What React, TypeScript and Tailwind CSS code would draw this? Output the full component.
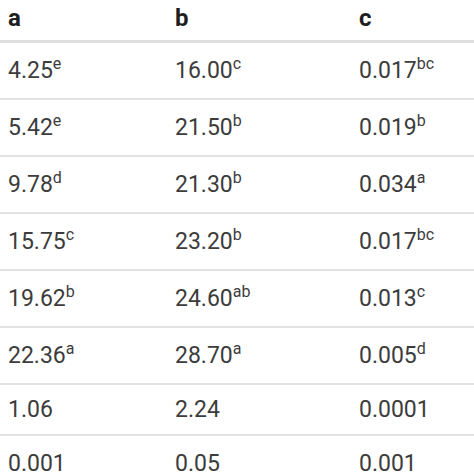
const rows: [string, string, string, string, string, string][] = [
  ['4.25', 'e', '16.00', 'c', '0.017', 'bc'],
  ['5.42', 'e', '21.50', 'b', '0.019', 'b'],
  ['9.78', 'd', '21.30', 'b', '0.034', 'a'],
  ['15.75', 'c', '23.20', 'b', '0.017', 'bc'],
  ['19.62', 'b', '24.60', 'ab', '0.013', 'c'],
  ['22.36', 'a', '28.70', 'a', '0.005', 'd'],
  ['1.06', '', '2.24', '', '0.0001', ''],
  ['0.001', '', '0.05', '', '0.001', ''],
];

function Cell({ value, mark }: { value: string; mark: string }) {
  return (
    <div className="pl-2 flex items-center pt-[2px]">
      <span>
        {value}
        {mark && <sup className="text-[16px] -top-[0.55em]">{mark}</sup>}
      </span>
    </div>
  );
}

export default function App() {
  return (
    <div className="w-[474px] h-[474px] overflow-hidden bg-white font-['Roboto',sans-serif] text-[23px] text-[#3c3c3c]">
      <div className="grid grid-cols-[167px_184px_1fr] h-[43px] border-b-[3px] border-[#dedede] font-bold text-[#1e1e1e] text-[24px]">
        <div className="pl-2">a</div>
        <div className="pl-2">b</div>
        <div className="pl-2">c</div>
      </div>
      {rows.map((r, i) => (
        <div
          key={i}
          className={`grid grid-cols-[167px_184px_1fr] border-b-2 border-[#e2e2e2] ${
            i === 6 ? 'h-[51px]' : 'h-[57px]'
          }`}
        >
          <Cell value={r[0]} mark={r[1]} />
          <Cell value={r[2]} mark={r[3]} />
          <Cell value={r[4]} mark={r[5]} />
        </div>
      ))}
    </div>
  );
}
